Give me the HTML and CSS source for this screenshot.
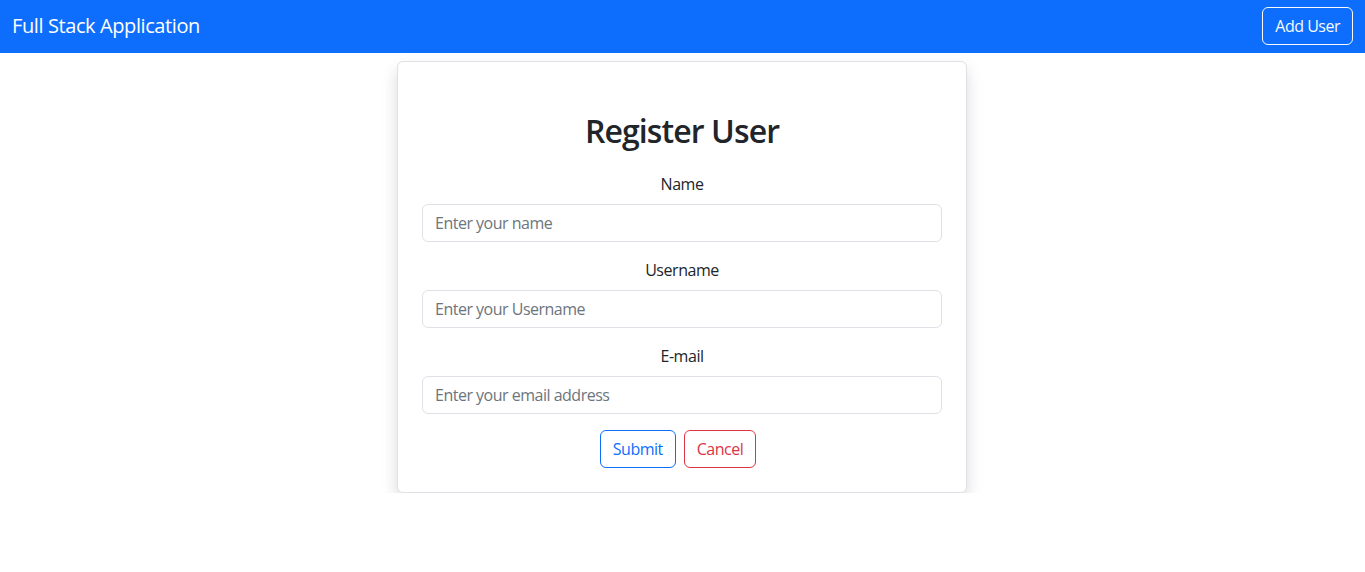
FILE: index.html
```html
<!DOCTYPE html>
<html lang="en">
<head>
<meta charset="utf-8">
<title>Full Stack Application</title>
<link rel="stylesheet" href="styles.css">
</head>
<body>
<nav class="navbar">
  <a class="brand" href="#">Full Stack Application</a>
  <button class="btn btn-light-outline">Add User</button>
</nav>
<main class="container">
  <div class="card">
    <h2 class="title">Register User</h2>
    <div class="field">
      <label class="label" for="name">Name</label>
      <input class="input" id="name" type="text" placeholder="Enter your name">
    </div>
    <div class="field">
      <label class="label" for="username">Username</label>
      <input class="input" id="username" type="text" placeholder="Enter your Username">
    </div>
    <div class="field">
      <label class="label" for="email">E-mail</label>
      <input class="input" id="email" type="text" placeholder="Enter your email address">
    </div>
    <div class="actions">
      <button class="btn btn-primary-outline">Submit</button><button class="btn btn-danger-outline">Cancel</button>
    </div>
  </div>
</main>
</body>
</html>
```

FILE: styles.css
```css
* { box-sizing: border-box; }
html, body { margin: 0; padding: 0; }
body {
  font-family: "Open Sans", "Noto Sans", sans-serif;
  font-size: 16px;
  line-height: 1.5;
  letter-spacing: -0.45px;
  color: #212529;
  background: #fff;
}
.navbar {
  height: 53px;
  background: #0d6efd;
  display: flex;
  align-items: center;
  justify-content: space-between;
  padding: 0 12px;
}
.brand {
  color: #fff;
  text-decoration: none;
  font-size: 20px;
  line-height: 30px;
  letter-spacing: -0.4px;
  margin-top: -2px;
}
.btn {
  font-family: inherit;
  font-size: 16px;
  letter-spacing: -0.5px;
  line-height: 24px;
  height: 38px;
  padding: 6px 12px;
  border-radius: 6px;
  background: transparent;
  border: 1px solid;
  cursor: pointer;
}
.btn-light-outline { color: #f8f9fa; border-color: #f8f9fa; margin-top: -1px; }
.btn-primary-outline { color: #0d6efd; border-color: #0d6efd; }
.btn-danger-outline { color: #dc3545; border-color: #dc3545; margin: 0 8px; }
.container {
  width: 570px;
  margin: 8px 0 0 397px;
}
.card {
  border: 1px solid #dee2e6;
  border-radius: 6px;
  padding: 24px;
  box-shadow: 0 8px 16px rgba(0, 0, 0, 0.15);
  background: #fff;
}
.title {
  text-align: center;
  font-size: 32px;
  font-weight: 600;
  letter-spacing: -0.9px;
  line-height: 38.4px;
  margin: 26px 0 22px;
}
.field {
  display: flex;
  flex-direction: column;
  margin-bottom: 16px;
}
.label {
  text-align: center;
  margin-bottom: 8px;
}
.input {
  height: 38px;
  padding: 6px 12px;
  font-family: inherit;
  font-size: 16px;
  letter-spacing: -0.5px;
  line-height: 24px;
  color: #212529;
  border: 1px solid #dee2e6;
  border-radius: 6px;
  background: #fff;
}
.input::placeholder { color: #6c757d; opacity: 1; }
.actions {
  display: flex;
  justify-content: center;
}
```
